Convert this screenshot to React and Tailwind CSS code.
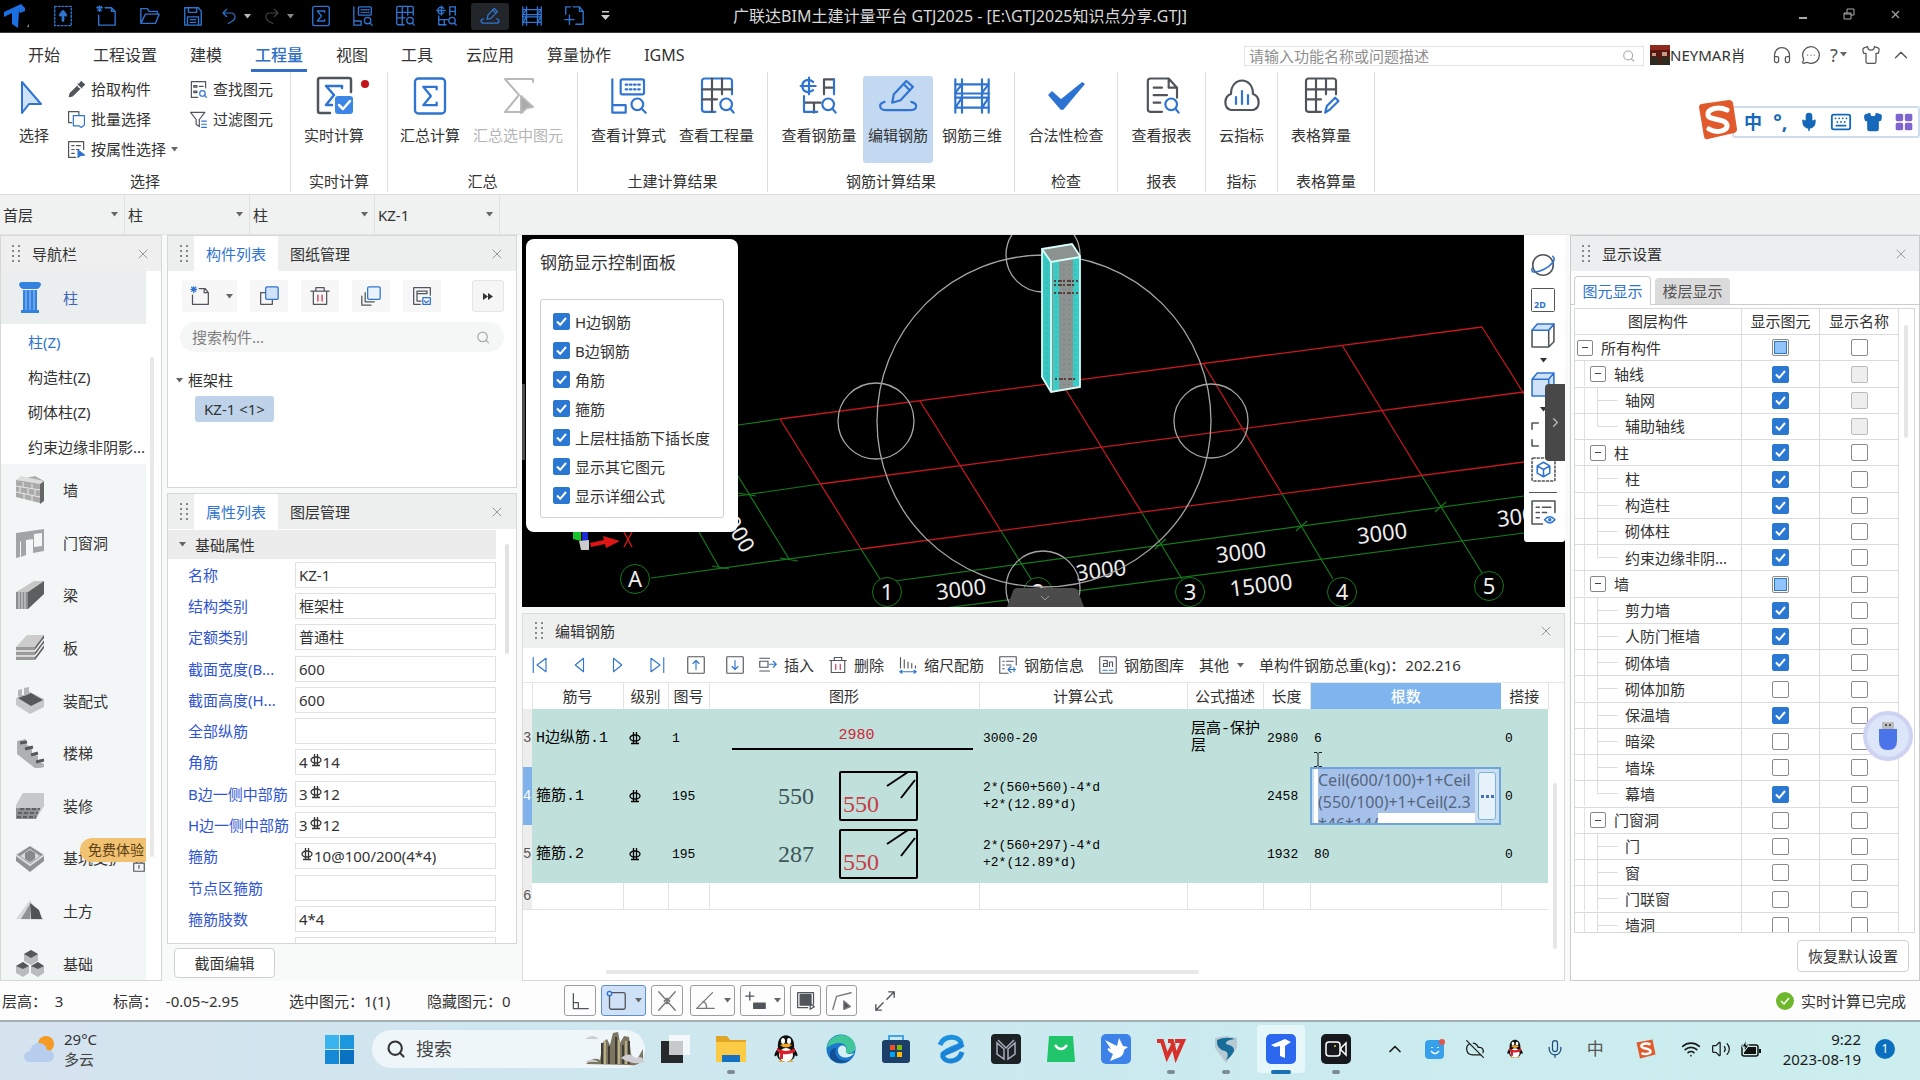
import { useEffect, useRef } from "react";
import {
  ChevronRight,
  ChevronUp,
  CloudOff,
  Headphones,
  Keyboard,
  LayoutGrid,
  MessageCircleMore,
  Mic,
  Search,
  Shirt,
  Volume2,
  Wifi,
  X
} from "lucide-react";

const BLUE = "#2f74d0";
const DARK = "#50555b";

/* ---------- small shared pieces ---------- */

function Icon({ size = 24, box = 24, sw = 1.5, color = BLUE, className = "", children }) {
  return (
    <svg
      width={size}
      height={size}
      viewBox={`0 0 ${box} ${box}`}
      fill="none"
      stroke={color}
      strokeWidth={sw}
      strokeLinejoin="round"
      strokeLinecap="round"
      className={`shrink-0 ${className}`}
      aria-hidden="true"
    >
      {children}
    </svg>
  );
}

function Caret({ className = "text-[#666]" }) {
  return (
    <svg width="7" height="5" viewBox="0 0 7 5" className={`shrink-0 ${className}`} aria-hidden="true">
      <path d="M0 0h7L3.500 4.500z" fill="currentColor" />
    </svg>
  );
}

function Grip() {
  return (
    <svg width="8" height="18" viewBox="0 0 8 18" fill="#888" className="shrink-0" aria-hidden="true">
      {[0, 5, 10, 15].map((y) => (
        <g key={y}>
          <rect x="0" y={y} width="2" height="2" />
          <rect x="6" y={y} width="2" height="2" />
        </g>
      ))}
    </svg>
  );
}

function CloseButton() {
  return (
    <button aria-label="关闭" className="ml-auto text-[#9a9a9a]">
      <X size={16} strokeWidth={1.5} />
    </button>
  );
}

function Check({ label, checked, partial, disabled }) {
  return (
    <span className="inline-grid h-[17px] w-[17px] place-items-center align-middle">
      <input
        type="checkbox"
        aria-label={label}
        defaultChecked={checked}
        disabled={disabled}
        className="col-start-1 row-start-1 h-[17px] w-[17px] appearance-none rounded-[2px] border border-[#8a8a8a] bg-white checked:border-[#2b78d2] checked:bg-[#2b78d2] disabled:border-[#bbb] disabled:bg-[#eee]"
      />
      {checked && (
        <svg viewBox="0 0 17 17" className="pointer-events-none col-start-1 row-start-1 h-[17px] w-[17px]" fill="none" stroke="#fff" strokeWidth="2">
          <path d="M4 8.500l3.200 3.300L13 5" />
        </svg>
      )}
      {partial && <span className="pointer-events-none col-start-1 row-start-1 h-[13px] w-[13px] border border-[#2b78d2] bg-[#90c4fb]" />}
    </span>
  );
}

/* ---------- drawings used in more than one place ---------- */

const art = {
  sum: (
    <>
      <rect x="3" y="1.500" width="18" height="21" rx="2" />
      <path d="M16 8V6.500H8L12.500 12 8 17.500h8V16" />
    </>
  ),
  formula: (
    <>
      <path d="M2 2v20h8v-4.500H2" />
      <rect x="7" y="2" width="14" height="9" rx="1" />
      <path d="M10 5.200h8.500M10 8h8.500" strokeDasharray="1 1.500" />
      <circle cx="17" cy="17" r="3.500" />
      <path d="M19.500 19.500L22 22" />
    </>
  ),
  quantity: (c) => (
    <>
      <path d="M21 11V3a1.500 1.500 0 0 0-1.500-1.500h-15A1.500 1.500 0 0 0 3 3v17a1.500 1.500 0 0 0 1.500 1.500H11" />
      <path d="M3 8h18M3 14h9M9 1.500v20M15 1.500V11" stroke={c || DARK} />
      <circle cx="17.500" cy="17" r="3.500" />
      <path d="M20 19.500l2 2.500" />
    </>
  ),
  rebar: (c) => (
    <>
      <path d="M8.500 3.500C5 1 2 3 2 6s3 5 6.500 2.500M1 6h9M6 1v10" />
      <path d="M15 11V2h6M15 7h6M3 16h10M9 16v6" stroke={c || DARK} />
      <path d="M3 12v9.500h8M21 11V2" />
      <circle cx="17.500" cy="17" r="3.500" />
      <path d="M20 19.500l2 2.500" />
    </>
  ),
  pen: (
    <>
      <path d="M8.500 16l1-5 7.500-8 4 3.500-7.500 8z" />
      <path d="M15.500 5l3.500 3.500M4 15.500c-4 1-3.500 5 1 5h14c5 0 5-4 1-5" />
    </>
  ),
  rebar3d: (
    <>
      <path d="M2 2v20M22 2v20M6 2v20M18 2v20" />
      <path d="M2 5h20M2 10.500h20M2 13h20M2 19h20M2 10l4-5M18 10l4-5M2 19l4-6M18 19l4-6" />
    </>
  )
};

/* ---------- title bar ---------- */

function TitleBar() {
  return (
    <header className="grid h-[33px] shrink-0 grid-cols-[minmax(0,1fr)_auto_minmax(0,1fr)] items-center border-b border-[#3a3a3a] bg-black">
      <div className="flex items-center">
        <svg width="26" height="28" viewBox="0 0 26 28" className="ml-1 shrink-0" aria-label="GTJ">
          <path d="M0 10L17 2l4 4v3l-5 2-1-2-1 17-6-4V11l-8 4z" fill="#1c6fe0" />
          <path d="M23 25l2-3v3z" fill="#999" />
        </svg>
        <div className="ml-[22px] flex w-[152px] items-center justify-between">
          <Icon size={22}><path d="M3 1.500h18v21H3z" strokeDasharray="2 2" /><path d="M12 17V8m-3 3l3-4 3 4" strokeWidth="3" /></Icon>
          <Icon size={22}><path d="M11 3h7l4 4v15H4V11M18 3v4h4M2 3h6M5 1v6M3 2l4 4M7 2L3 6" /></Icon>
          <Icon size={22}><path d="M2 20V4h7l2 3h9v3M2 20h16l4-10H7z" /></Icon>
          <Icon size={22}><path d="M3 3h15l3 4v15H3zM7 3v5h9V3M6 13h12v9H6zM9 16h6M9 19h6" /></Icon>
        </div>
        <div className="ml-4 flex items-center gap-1.5">
          <Icon size={18}><path d="M4 8h11c6 0 7 8 1 11l-5 3M9 3L4 8l5 5" /></Icon>
          <Caret className="text-[#bbb]" />
        </div>
        <div className="ml-3 flex items-center gap-1.5">
          <Icon size={18} color="#444"><path d="M20 8H9C3 8 2 16 8 19l5 3M15 3l5 5-5 5" /></Icon>
          <Caret className="text-[#888]" />
        </div>
        <div className="ml-4 flex items-center gap-[20px]">
          <Icon size={22}>{art.sum}</Icon>
          <Icon size={22}>{art.formula}</Icon>
          <Icon size={22}>{art.quantity(BLUE)}</Icon>
          <Icon size={22}>{art.rebar(BLUE)}</Icon>
        </div>
        <span className="ml-[13px] grid h-[27px] w-[38px] place-items-center rounded-[3px] bg-[#22252a]">
          <Icon size={20}>{art.pen}</Icon>
        </span>
        <Icon size={22} className="ml-3">{art.rebar3d}</Icon>
        <Icon size={22} className="ml-[20px]"><path d="M3 10V2h5M11 2h7l4 5v14h-8M18 2v5h4M7 11v10M2 16h10" /></Icon>
        <svg width="9" height="10" viewBox="0 0 9 10" className="ml-4" fill="#ccc"><path d="M1 0h7v1.500H1zM0 4h9L4.500 9z" /></svg>
      </div>
      <h1 className="text-base leading-[30px] whitespace-nowrap text-[#d9d9d9]">广联达BIM土建计量平台 GTJ2025 - [E:\GTJ2025知识点分享.GTJ]</h1>
      <div className="flex justify-end gap-[34px] pr-[18px] pb-1 text-[#aaa]">
        <button aria-label="最小化"><svg width="12" height="12"><path d="M2 9h8v2H2z" fill="#aaa" /></svg></button>
        <button aria-label="还原"><svg width="12" height="12" fill="none" stroke="#aaa"><path d="M1 5h7v6H1zM4 5V1h7v6H8M1 6h7" /></svg></button>
        <button aria-label="关闭窗口"><X size={13} strokeWidth={2} /></button>
      </div>
    </header>
  );
}

/* ---------- menu + ribbon ---------- */

const menus = ["开始", "工程设置", "建模", "工程量", "视图", "工具", "云应用", "算量协作", "IGMS"];

function MenuRow() {
  return (
    <div className="flex h-[39px] shrink-0 items-center bg-white">
      <nav className="flex gap-[33px] pl-7 text-base">
        {menus.map((m) => (
          <button
            key={m}
            className={
              m === "工程量"
                ? "relative h-[39px] pt-1 font-medium text-[#2f6fc4] after:absolute after:inset-x-[-4px] after:bottom-0 after:h-[3px] after:bg-[#2f6fc4]"
                : "h-[39px] pt-1"
            }
          >
            {m}
          </button>
        ))}
      </nav>
      <div className="mt-1.5 ml-auto flex h-5 w-[400px] items-center border border-[#e3e3e3] px-1">
        <input aria-label="搜索功能" placeholder="请输入功能名称或问题描述" className="w-full text-[15px] outline-none placeholder:text-[#8e8e8e]" />
        <Search size={14} className="mr-1 text-[#aaa]" />
      </div>
      <div className="mt-1 ml-1.5 flex items-center">
        <svg width="20" height="20" viewBox="0 0 20 20" aria-label="头像">
          <path d="M0 0h20v20H0z" fill="#5a1712" />
          <path d="M0 0h20v5H0z" fill="#8e2a1e" />
          <path d="M2 8h4v3H2zM12 7h5v4h-5z" fill="#c59a86" />
          <path d="M0 12h9v8H0zM11 12h9v8h-9z" fill="#2e2b20" />
        </svg>
        <span className="w-[102px] text-[15px]">NEYMAR肖</span>
        <div className="flex items-center gap-[9px] pr-2 text-[#555]">
          <Headphones size={20} strokeWidth={1.5} />
          <MessageCircleMore size={20} strokeWidth={1.5} />
          <button className="flex w-[22px] items-center gap-0.5 text-lg leading-5">?<Caret /></button>
          <Shirt size={20} strokeWidth={1.5} />
          <ChevronUp size={22} strokeWidth={1.5} />
        </div>
      </div>
    </div>
  );
}

function RibbonGroup({ title, className = "", bodyClass = "justify-center", children }) {
  return (
    <section className={`flex shrink-0 flex-col border-r border-[#dedede] ${className}`}>
      <div className={`flex flex-1 ${bodyClass}`}>{children}</div>
      <div className="text-center">{title}</div>
    </section>
  );
}

function BigButton({ label, active, muted, icon, className = "" }) {
  return (
    <button
      className={`mt-1 flex h-[87px] flex-col items-center gap-2 rounded-[3px] whitespace-nowrap ${active ? "bg-[#c3d9f2]" : ""} ${muted ? "text-[#b5b5b5]" : ""} ${className}`}
    >
      {icon}
      <span className="leading-[22px]">{label}</span>
    </button>
  );
}

function SmallButton({ label, icon, caret }) {
  return (
    <button className="flex h-[30px] items-center gap-[5px] whitespace-nowrap">
      {icon}
      {label}
      {caret && <Caret />}
    </button>
  );
}

function Ribbon() {
  return (
    <div className="flex h-[123px] shrink-0 border-b border-[#dcdcdc] bg-white text-[15px]">
      <div className="flex pb-0.5">
        <RibbonGroup title="选择" className="w-[291px]">
          <BigButton
            label="选择"
            className="mr-[16px] w-[34px]"
            icon={<Icon size={40} box={40} sw={2}><path d="M8 6v31l7-9h12z" fill="#cfe2f8" /></Icon>}
          />
          <div className="mt-0.5 mr-[10px] w-[112px]">
            <SmallButton label="拾取构件" icon={<Icon size={19} color={DARK}><path d="M14 5l5 5M13 8L4 17l-1 4 4-1 9-9M15 6l3-4 4 4-4 3z" fill="#50555b" /></Icon>} />
            <SmallButton label="批量选择" icon={<Icon size={19} color={DARK}><path d="M6 16H2V2h13v4" /><path d="M8 7h14v12l-4 3-3-2H8z" stroke={BLUE} /></Icon>} />
            <SmallButton label="按属性选择" caret icon={<Icon size={19} color={DARK}><path d="M11 22H2V2h19v10M6 7h3M12 7h5M6 12h3M12 12h3M6 17h3" /><path d="M14 13l8 6-5 .5L14 22z" fill={BLUE} stroke={BLUE} /></Icon>} />
          </div>
          <div className="mt-0.5">
            <SmallButton label="查找图元" icon={<Icon size={19} color={DARK}><path d="M21 10V2H3v20h8M6 7h4v2H6zM6 14h4v2H6zM13 8h5" /><circle cx="17" cy="17" r="3.500" stroke={BLUE} /><path d="M19 19l3 3" stroke={BLUE} /></Icon>} />
            <SmallButton label="过滤图元" icon={<Icon size={19} color={DARK}><path d="M2 3h18l-7 9v9l-4-3v-6z" /><path d="M16 14h6M16 18h6M16 22h6" stroke={BLUE} /></Icon>} />
          </div>
        </RibbonGroup>
        <RibbonGroup title="实时计算" className="w-[97px]" bodyClass="pl-2">
          <BigButton
            label="实时计算"
            className="relative w-[70px]"
            icon={
              <>
                <Icon size={40} box={40} sw={2.5} color={DARK}>
                  <path d="M37 16V4a2 2 0 0 0-2-2H6a2 2 0 0 0-2 2v31a2 2 0 0 0 2 2h10" />
                  <path d="M28 12v-2H12l8 9-8 10h6" stroke={BLUE} />
                  <rect x="21" y="20" width="18" height="18" rx="3" fill="#3b86e6" stroke="none" />
                  <path d="M25 29l4 4 7-8" stroke="#fff" />
                </Icon>
                <span className="absolute top-1 right-0 h-2 w-2 rounded-full bg-[#c4141c]" />
              </>
            }
          />
        </RibbonGroup>
        <RibbonGroup title="汇总" className="w-[190px]" bodyClass="pl-1">
          <BigButton label="汇总计算" className="w-[76px]" icon={<Icon size={40} sw={1.4}>{art.sum}</Icon>} />
          <BigButton label="汇总选中图元" muted className="w-[100px]" icon={<Icon size={40} box={40} sw={2} color="#b9b9b9"><path d="M35 6V3H7l14 16L7 36h18" /><path d="M23 20l12 11-6 1-6 5z" fill="#aaa" /></Icon>} />
        </RibbonGroup>
        <RibbonGroup title="土建计算结果" className="w-[190px]">
          <BigButton label="查看计算式" className="w-[88px]" icon={<Icon size={40} sw={1.3}>{art.formula}</Icon>} />
          <BigButton label="查看工程量" className="w-[88px]" icon={<Icon size={40} sw={1.3}>{art.quantity()}</Icon>} />
        </RibbonGroup>
        <RibbonGroup title="钢筋计算结果" className="w-[247px]">
          <BigButton label="查看钢筋量" className="w-[88px]" icon={<Icon size={40} sw={1.3}>{art.rebar()}</Icon>} />
          <BigButton label="编辑钢筋" active className="mr-1 w-[70px]" icon={<Icon size={40} sw={1.3}>{art.pen}</Icon>} />
          <BigButton label="钢筋三维" className="w-[70px]" icon={<Icon size={40} sw={1.3}>{art.rebar3d}</Icon>} />
        </RibbonGroup>
        <RibbonGroup title="检查" className="w-[103px]">
          <BigButton label="合法性检查" className="w-[80px]" icon={<Icon size={40} box={40}><path d="M3 19l3-3 9 8L36 7l2 1-21 25h-2z" fill="#2a72d4" /></Icon>} />
        </RibbonGroup>
        <RibbonGroup title="报表" className="w-[88px]">
          <BigButton label="查看报表" className="w-[70px]" icon={<Icon size={40} sw={1.3} color={DARK}><path d="M21 13V7l-5-5.500H5A1.500 1.500 0 0 0 3.500 3v17A1.500 1.500 0 0 0 5 21.500h7M16 2v5h5M7 7h5M7 11.500h8M7 16h4" /><circle cx="17.500" cy="17" r="3.500" stroke={BLUE} /><path d="M20 19.500l2 2.500" stroke={BLUE} /></Icon>} />
        </RibbonGroup>
        <RibbonGroup title="指标" className="w-[72px]">
          <BigButton label="云指标" className="w-[60px]" icon={<Icon size={40} box={40} sw={2.2} color={DARK}><path d="M9 34c-8-2-7-14 0-16C9 0 31 0 31 18c7 2 8 14 0 16z" /><path d="M14 28v-7M20 28V15M26 28v-9" stroke={BLUE} /></Icon>} />
        </RibbonGroup>
        <RibbonGroup title="表格算量" className="w-[97px]" bodyClass="pl-2">
          <BigButton label="表格算量" className="w-[70px]" icon={<Icon size={40} sw={1.3} color={DARK}><path d="M21 11V3a1.500 1.500 0 0 0-1.500-1.500h-15A1.500 1.500 0 0 0 3 3v17a1.500 1.500 0 0 0 1.500 1.500H12M3 8h18M3 14h9M9 1.500v20M15 1.500V11" /><path d="M14.500 22l1-4 5-5 2 2-5 5z" stroke={BLUE} /></Icon>} />
        </RibbonGroup>
      </div>
      <div className="mt-[29px] ml-auto flex h-[38px] items-center">
        <svg width="40" height="40" viewBox="0 0 40 40" className="z-10 shrink-0" aria-label="搜狗输入法">
          <path d="M1 7Q1 5 3 4L31 0q3 0 4 3l4 26q0 3-3 4L10 39q-3 1-4-2z" fill="#e05a2c" />
          <path d="M29 10C20 6 9 9 10 15s18 3 19 10-12 8-18 4" fill="none" stroke="#fff" strokeWidth="5" strokeLinecap="round" />
        </svg>
        <div className="mt-1 -ml-1.5 flex h-8 w-[188px] items-center justify-between rounded-[3px] border-2 border-[#cfdcec] bg-white pr-1 pl-2.5 text-[#1668b8]">
          <span className="text-lg leading-none font-bold">中</span>
          <span className="text-xl leading-none font-bold">°,</span>
          <Mic size={20} fill="#1668b8" />
          <Keyboard size={22} />
          <Shirt size={20} fill="#1668b8" />
          <LayoutGrid size={20} className="text-[#8065d0]" fill="#8065d0" />
        </div>
      </div>
    </div>
  );
}

function FloorSelectors() {
  return (
    <div className="flex h-10 shrink-0 border-b border-[#e2e4e4] bg-[#f0f2f1] text-[15px]">
      {[["楼层", "首层"], ["构件大类", "柱"], ["构件类型", "柱"], ["构件", "KZ-1"]].map(([name, value]) => (
        <label key={name} className="flex w-[125px] items-center border-r border-[#e0e2e2] pr-1.5 pl-[3px]">
          <select aria-label={name} className="w-full appearance-none bg-transparent outline-none">
            <option>{value}</option>
          </select>
          <Caret />
        </label>
      ))}
    </div>
  );
}

/* ---------- left navigation ---------- */

const navItems = [
  ["墙", <g key="a"><path d="M1 5l19-4 9 5-4 22L1 22z" fill="#aaa" /><path d="M25 9l4-3v20l-4 3z" fill="#666" /><path d="M1 5l5-4 23 5-4 3z" fill="#ddd" /><path d="M1 11l24 4M1 17l24 5M8 7v5M17 9v5M5 12v5M13 14v5M20 15v5M9 18v6M17 20v6" stroke="#e9e9e9" /></g>],
  ["门窗洞", <g key="b"><path d="M1 5l28-4v22l-11 2V11l-7 1v15l-5 2V13l-1 1v15l-4 1z" fill="#a2a5a7" /><path d="M19 6l8-1v13l-8 1z" fill="#f4f6f6" /></g>],
  ["梁", <g key="c"><path d="M1 12L19 1h10L13 12z" fill="#c7c7c7" /><path d="M1 12h12v17H1z" fill="#8b8e90" /><path d="M13 12L29 1v13L13 29z" fill="#5c5f60" /><path d="M4 12v17M7 12v17M10 12v17" stroke="#ddd" /></g>],
  ["板", <g key="d"><path d="M1 14L12 2h17L20 14z" fill="#ccc" /><path d="M1 14h19v13H1z" fill="#999" /><path d="M20 14l9-12v13L20 27z" fill="#5f6263" /><path d="M1 18h19l9-12M1 23h19l9-12" stroke="#eee" fill="none" strokeWidth="1.500" /></g>],
  ["装配式", <g key="e"><path d="M1 12l14-6 14 7v8l-14 7-14-9z" fill="#c5c7c8" /><path d="M3 12l13-5 12 7-12 6z" fill="#55595a" /><path d="M3 4l4-1v7l-4 1zM9 2l5-1v7l-5 2z" fill="#b5b8b9" /></g>],
  ["楼梯", <g key="f"><path d="M2 3l9-2v5l6 4v5l6 3v5l6 3v3l-8 2L2 16z" fill="#aeb1b2" /><path d="M5 5l7-1M10 11l8-2M16 17l7-2M21 24l8-2" stroke="#55595a" strokeWidth="3" /></g>],
  ["装修", <g key="g"><path d="M1 14L8 2h21v13l-8 13H1z" fill="#c6c9ca" /><path d="M1 17h24l-4 11H1z" fill="#8c9091" /><path d="M5 18h20M3 22h20M2 26h19" stroke="#4d5152" strokeWidth="1.500" strokeDasharray="4 2" /></g>],
  ["基坑支护", <g key="h"><path d="M1 12L15 3l14 9v6l-14 11L1 18z" fill="#8f9293" /><path d="M5 13l10-7 10 7-10 7z" fill="#d5d7d8" /><path d="M10 16v-6l5-3 5 3v6l-5 3z" fill="#85898a" /><path d="M1 12l14 10 14-10" stroke="#ddd" fill="none" strokeWidth="2" /></g>],
  ["土方", <g key="i"><path d="M1 23L15 4l14 20z" fill="#d5d9da" /><path d="M6 23l9-15v15z" fill="#8e9293" /><path d="M15 7l9 7 3 9H16z" fill="#505455" /></g>],
  ["基础", <g key="j"><path d="M9 5l7-4 7 4v7l-7 4-7-4zM1 17l7-4 6 4v7l-6 4-7-4zM16 17l7-4 6 4v7l-6 4-7-4z" fill="#b9bcbd" /><path d="M9 5l7-4 7 4-7 4zM1 17l7-4 6 4-6 3zM16 17l7-4 6 4-6 3z" fill="#54585a" /></g>]
];

function NavPanel() {
  return (
    <aside className="flex w-[162px] shrink-0 flex-col overflow-hidden border border-[#d6d8d8] bg-white">
      <div className="flex h-[35px] shrink-0 items-center bg-[#efefef] pr-2.5 pl-[11px]">
        <Grip />
        <span className="ml-3">导航栏</span>
        <CloseButton />
      </div>
      <div className="flex min-h-0 flex-1">
        <div className="w-[145px] overflow-hidden">
          <button className="flex h-[53px] w-full items-center bg-[#ebeeef] pl-[18px] text-[#3f68b8]">
            <svg width="22" height="32" viewBox="0 0 22 32" className="mr-[22px]">
              <path d="M0 3q0-3 3-3h16q3 0 3 3-1 3-4 4H4Q1 6 0 3z" fill="#3382df" />
              <path d="M4 8h14v20H4zM2 28h18v3H2z" fill="#3382df" />
              <path d="M7 8v20M11 8v20M15 8v20" stroke="#9fc8f6" />
            </svg>
            柱
          </button>
          {["柱(Z)", "构造柱(Z)", "砌体柱(Z)", "约束边缘非阴影..."].map((t, i) => (
            <button key={t} className={`block h-[35px] w-full pl-[27px] text-left whitespace-nowrap ${i === 0 ? "text-[#2f74d0]" : ""}`}>
              {t}
            </button>
          ))}
          <div className="grid h-[526px] auto-rows-fr bg-[#f3f6f6]">
            {navItems.map(([name, drawing]) => (
              <button key={name} className="relative flex items-center pl-3.5">
                <svg width="30" height="30" viewBox="0 0 30 30" className="mr-[18px] shrink-0">{drawing}</svg>
                {name}
                {name === "基坑支护" && (
                  <>
                    <Icon size={14} color="#555" className="absolute right-0 bottom-3" sw={2}><path d="M3 7h18v14H3zM12 11v5M8 7V3h8v4" /></Icon>
                    <span className="absolute top-1.5 right-0 h-6 rounded-l-full bg-[#f0c272] pr-0.5 pl-2 text-sm leading-6 text-[#5b3d12]">免费体验</span>
                  </>
                )}
              </button>
            ))}
          </div>
        </div>
        <div className="mt-[86px] ml-1 h-[500px] w-1 rounded-full bg-[#e8e8e8]" />
      </div>
    </aside>
  );
}

/* ---------- component list + properties ---------- */

function TabHeader({ tabs }) {
  return (
    <div className="flex h-[35px] shrink-0 items-center bg-[#edeeee] pr-[11px] pl-3">
      <Grip />
      <div className="ml-1.5 flex h-full">
        <button className="bg-white px-3 text-[#2f74d0]">{tabs[0]}</button>
        <button className="px-3">{tabs[1]}</button>
      </div>
      <CloseButton />
    </div>
  );
}

function ComponentPanel() {
  return (
    <section className="flex h-[253px] shrink-0 flex-col border border-[#d6d8d8] bg-white">
      <TabHeader tabs={["构件列表", "图纸管理"]} />
      <div className="mt-[9px] flex h-8 gap-[13px] pr-3 pl-3.5">
        <button aria-label="新建" className="flex w-[55px] items-center gap-4 bg-[#f7f7f7] pl-2">
          <Icon size={20} color={DARK}><path d="M11 3h7l4 5v14H3V11M17 3v5h5" /><path d="M1 4h7M4.500 1v7M2 1.500l5 5M7 1.500l-5 5" stroke={BLUE} /></Icon>
          <Caret />
        </button>
        <button aria-label="复制" className="grid w-[38px] place-items-center bg-[#f7f7f7]">
          <Icon size={20} color={DARK}><path d="M8 8H2v14h14v-5" /><rect x="8" y="1" width="15" height="15" rx="1.500" fill="#cfe2f8" stroke={BLUE} /></Icon>
        </button>
        <button aria-label="删除构件" className="grid w-[38px] place-items-center bg-[#f7f7f7]">
          <Icon size={20} color={DARK}><path d="M1 6h22M4 6v16h16V6M7 6V2h10v4" /><path d="M9.500 11v7M14.500 11v7" stroke="#c43150" /></Icon>
        </button>
        <button aria-label="层间复制" className="grid w-[38px] place-items-center bg-[#f7f7f7]">
          <Icon size={20} color={DARK}><path d="M5 8v11h11M1 12v11h11" /><rect x="8" y="1" width="15" height="15" rx="1.500" fill="#eaf3fd" stroke={BLUE} /></Icon>
        </button>
        <button aria-label="存档" className="grid w-[38px] place-items-center bg-[#f7f7f7]">
          <Icon size={20} color={DARK}><path d="M10 22H2V2h20v9M6 6h12v3H6zM6 9v9h5" /><path d="M13 14h9v8h-9zM15 18l2 2 3-2" stroke={BLUE} /></Icon>
        </button>
        <button aria-label="更多" className="ml-auto grid w-8 place-items-center rounded-[3px] border border-[#e6e6e6] bg-[#f6f6f6]">
          <svg width="10" height="7" fill="#333"><path d="M0 0l5 3.500L0 7zM5 0l5 3.500L5 7z" /></svg>
        </button>
      </div>
      <div className="mx-3 mt-2.5 flex h-[30px] items-center rounded-full bg-[#f5f6f6] pr-3.5 pl-3">
        <input aria-label="搜索构件" placeholder="搜索构件..." className="w-full bg-transparent outline-none placeholder:text-[#808080]" />
        <Search size={15} className="text-[#aaa]" />
      </div>
      <div className="mt-4 flex h-6 items-center gap-[5px] pl-2">
        <Caret />
        框架柱
      </div>
      <button className="mt-1 ml-[27px] h-[26px] w-[79px] rounded-[3px] bg-[#bed3ea] whitespace-pre">KZ-1 &lt;1&gt;</button>
    </section>
  );
}

function RebarMark({ className = "" }) {
  return (
    <svg width="12" height="13" viewBox="0 0 12 13" fill="none" stroke="currentColor" strokeWidth="1.300" className={className} aria-hidden="true">
      <ellipse cx="6" cy="6" rx="5" ry="3" />
      <path d="M4.500 0v11M7.500 0v11M2 11.500h8" />
    </svg>
  );
}

const properties = [
  ["名称", "KZ-1"],
  ["结构类别", "框架柱"],
  ["定额类别", "普通柱"],
  ["截面宽度(B...", "600"],
  ["截面高度(H...", "600"],
  ["全部纵筋", ""],
  ["角筋", "4\u200314", 1],
  ["B边一侧中部筋", "3\u200312", 1],
  ["H边一侧中部筋", "3\u200312", 1],
  ["箍筋", "\u200310@100/200(4*4)", 2],
  ["节点区箍筋", ""],
  ["箍筋肢数", "4*4"],
  ["", ""]
];

function PropertyPanel() {
  return (
    <section className="flex min-h-0 flex-1 flex-col border border-[#d6d8d8] bg-white">
      <TabHeader tabs={["属性列表", "图层管理"]} />
      <div className="flex min-h-0 flex-1">
        <div className="min-w-0 flex-1 overflow-hidden">
          <div className="mt-px flex h-[29px] items-center gap-[9px] bg-[#ececec] pl-[11px]">
            <Caret />
            基础属性
          </div>
          <div className="grid h-[407px] auto-rows-fr">
            {properties.map(([name, value, mark]) => (
              <label key={name} className="flex items-center whitespace-nowrap">
                <span className="w-[127px] shrink-0 pl-5 text-[#2f55d4]">{name}</span>
                <span className="relative flex h-[26px] flex-1 items-center border border-[#e1e1e1]">
                  <input defaultValue={value} className="w-full min-w-0 px-[3px] outline-none" />
                  {mark === 1 && <RebarMark className="absolute top-1 left-[14px]" />}
                  {mark === 2 && <RebarMark className="absolute top-1 left-[5px]" />}
                </span>
              </label>
            ))}
          </div>
        </div>
        <div className="w-5 pt-[15px] pl-[9px]">
          <div className="h-[110px] w-1 rounded-full bg-[#e2e2e2]" />
        </div>
      </div>
    </section>
  );
}

/* ---------- 3D view ---------- */

const redLines = [
  [780, 419, 1482, 327], [820, 484, 1524, 392], [861, 549, 1524, 462],
  [780, 419, 861, 549], [920, 401, 1001, 531], [1063, 385, 1142, 513],
  [1203, 363, 1282, 494], [1342, 345, 1422, 476], [1482, 327, 1524, 394]
];
const greenLines = [
  [738, 425, 780, 419], [738, 496, 820, 484], [651, 578, 861, 549],
  [699, 532, 720, 569], [738, 476, 789, 559],
  [880, 583, 1524, 496], [945, 608, 1524, 533],
  [861, 549, 880, 579], [1001, 531, 1031, 579], [1142, 513, 1182, 579],
  [1282, 494, 1333, 579], [1422, 476, 1482, 573],
  [712, 566, 729, 569], [780, 558, 798, 561], [738, 493, 756, 496],
  [1155, 549, 1166, 539], [1296, 531, 1307, 521], [1435, 512, 1446, 502]
];
const axes = [[635, 579, "A"], [887, 592, "1"], [1038, 592, "2"], [1190, 592, "3"], [1342, 592, "4"], [1489, 586, "5"]];
const dims = [[961, 589, "3000"], [1101, 570, "3000"], [1241, 552, "3000"], [1382, 533, "3000"], [1522, 516, "3000"], [1261, 585, "15000"]];

function Scene() {
  return (
    <svg viewBox="522 235 1043 372" preserveAspectRatio="xMidYMid slice" className="absolute inset-0 h-full w-full" fontFamily="'Noto Sans', sans-serif" fontSize="22" textAnchor="middle" aria-label="三维视图">
      <g stroke="#c31820" strokeWidth="1.300">{redLines.map(([a, b, c, d], i) => <line key={i} x1={a} y1={b} x2={c} y2={d} />)}</g>
      <g stroke="#157a1c" strokeWidth="1.200">{greenLines.map(([a, b, c, d], i) => <line key={i} x1={a} y1={b} x2={c} y2={d} />)}</g>
      {axes.map(([x, y, t]) => (
        <g key={t}>
          <circle cx={x} cy={y} r="14.500" fill="#000" stroke="#157a1c" />
          <text x={x} y={y + 8} fill="#eee">{t}</text>
        </g>
      ))}
      {dims.map(([x, y, t]) => (
        <text key={x} x={x} y={y + 8} fill="#eee" transform={`rotate(-7 ${x} ${y})`}>{t}</text>
      ))}
      <text x="738" y="541" fill="#eee" transform="rotate(60 738 535)">000</text>
      <g fill="none" stroke="#a5a5a5" strokeWidth="1.300">
        <ellipse cx="1044" cy="421" rx="167" ry="166" />
        <circle cx="876" cy="421" r="38" />
        <circle cx="1211" cy="421" r="37" />
        <circle cx="1043" cy="255" r="37" />
        <circle cx="1043" cy="588" r="37" />
      </g>
      <path d="M1042 249l30-5 8 12v131l-29 5-9-15z" fill="#8c9290" />
      <path d="M1043 251l8 10v129l-8-13z" fill="#33c9c2" />
      <path d="M1053 262h6v128h-6zM1073 258h6v128h-6z" fill="#35cfc8" />
      <path d="M1056 266v120M1075 264v120M1047 262v120" stroke="#57a5a1" strokeWidth="1" strokeDasharray="2 3" />
      <path d="M1064 264v124M1069 264v124" stroke="#6d7372" strokeDasharray="1 4" />
      <path d="M1054 281h24M1054 285h22M1054 293h24M1055 379h22" stroke="#55403c" strokeWidth="2" strokeDasharray="2 2 4 1" />
      <path d="M1042 249l30-5 8 12v131l-29 5-9-15zM1042 249l9 13 29-5M1051 262v130" fill="none" stroke="#d6fffb" strokeWidth="1.800" />
      <path d="M573 532h8v9l-8-2z" fill="#18c62c" />
      <path d="M582 532h6v12h-6z" fill="#1c2cd0" />
      <path d="M579 541l10-1v10h-8z" fill="#ccc" />
      <path d="M590 543l14-3-1-4 17 5-14 7-1-4-14 3z" fill="#e01616" />
      <path d="M624 532l8 15M632 532l-8 15" stroke="#d01616" strokeWidth="1.500" />
      <path d="M1007 607l6-16q1-3 4-3h56q4 0 5 3l6 16z" fill="#4b4b4b" />
      <path d="M1041 596l4 4 4-4" fill="none" stroke="#999" />
      <path d="M522 384h3v76h-3z" fill="#4b4b4b" />
    </svg>
  );
}

const shown = ["H边钢筋", "B边钢筋", "角筋", "箍筋", "上层柱插筋下插长度", "显示其它图元", "显示详细公式"];

function View3D() {
  return (
    <section className="relative h-[372px] shrink-0 overflow-hidden bg-black">
      <Scene />
      <div className="absolute top-1 left-1 w-[212px] rounded-lg bg-white p-3.5 pt-2.5">
        <h2 className="text-[17px] leading-7">钢筋显示控制面板</h2>
        <fieldset className="mt-[22px] rounded-[3px] border border-[#cfd2d2] px-3 py-[7px]">
          {shown.map((t) => (
            <label key={t} className="flex h-[29px] items-center gap-[5px] whitespace-nowrap">
              <Check checked label={t} />
              {t}
            </label>
          ))}
        </fieldset>
      </div>
      <div className="absolute top-0 right-0 flex h-[307px] w-[41px] flex-col items-center rounded-b-[3px] bg-white pt-[17px] pr-[3px]">
        <Icon size={26} color={DARK}><circle cx="12" cy="12" r="9.500" /><path d="M21 4c4 3-2 9-8 12S0 20 2 15" stroke={BLUE} /></Icon>
        <svg width="24" height="24" viewBox="0 0 24 24" className="mt-[10px] shrink-0" fill="none" stroke={DARK}><rect x=".5" y=".5" width="23" height="23" rx="1" /><text x="3" y="20" fontSize="9" fontWeight="700" fontFamily="'Noto Sans'" stroke="none" fill={BLUE}>2D</text></svg>
        <Icon size={25} color={DARK} className="mt-[11px]"><path d="M1 7h16v16H1zM17 7l5-6v17l-5 5" /><path d="M1 7l5-6h16l-5 6z" fill="#cfe2f8" stroke={BLUE} /></Icon>
        <Caret className="mt-2.5 text-[#333]" />
        <Icon size={25} color={BLUE} className="mt-[9px]"><path d="M1 7h16v16H1zM17 7l5-6v17l-5 5M1 7l5-6h16l-5 6z" fill="#cfe2f8" /></Icon>
        <Caret className="mt-2.5 text-[#333]" />
        <Icon size={25} color={DARK} className="mt-2.5"><path d="M7 1H1v6M17 1h6v6M1 17v6h6M23 17v6h-6" /></Icon>
        <Icon size={25} color={DARK} className="mt-2.5"><rect x="1" y="1" width="22" height="22" rx="1" strokeDasharray="2 2" /><path d="M12 5l6 3.500v7L12 19l-6-3.500v-7zM6 8.500l6 3.500 6-3.500M12 12v7" stroke={BLUE} /></Icon>
        <span className="mt-2.5 h-px w-7 shrink-0 bg-[#555]" />
        <Icon size={25} color={DARK} className="mt-[7px]"><path d="M11 23H1V1h22v11M5 7h3M11 7h8M5 12h3M11 12h4M5 17h3" /><path d="M13 19q5-6 10 0-5 6-10 0z" stroke={BLUE} /><circle cx="18" cy="19" r="1" stroke={BLUE} /></Icon>
      </div>
      <button aria-label="收起工具栏" className="absolute top-[149px] right-0 grid h-[77px] w-5 place-items-center rounded-l-[4px] bg-[#484848] text-[#bbb]">
        <ChevronRight size={15} />
      </button>
    </section>
  );
}

/* ---------- rebar editor ---------- */

function BarButton({ icon, label }) {
  return (
    <button className="flex items-center gap-[7px]">
      {icon}
      {label}
    </button>
  );
}

function FormulaEditor() {
  const ref = useRef(null);
  useEffect(() => {
    ref.current.focus({ preventScroll: true });
    ref.current.select();
  }, []);
  return (
    <div className="flex h-[58px] border-2 border-[#6fa3dc] bg-[#c9dff0]">
      <textarea
        ref={ref}
        aria-label="根数"
        readOnly
        defaultValue={"Ceil(600/100)+1+Ceil\n(550/100)+1+Ceil(2.3\n*46*14/"}
        className="ml-0.5 h-full w-[161px] resize-none overflow-hidden bg-white pl-1 font-['Noto_Sans'] text-base leading-[22px] whitespace-pre text-[#55657e] outline-none selection:bg-[#a5c1e9] selection:text-[#55657e]"
      />
      <button aria-label="编辑公式" className="m-[3px] grid flex-1 place-items-center rounded-[3px] border border-[#7db3d6] bg-[#e6f1f9] text-[#4a6fb5]">
        <svg width="13" height="3" fill="currentColor"><path d="M0 0h3v3H0zM5 0h3v3H5zM10 0h3v3h-3z" /></svg>
      </button>
    </div>
  );
}

function Stirrup({ side }) {
  return (
    <svg width="268" height="54" viewBox="0 0 268 54" fontFamily="'Liberation Serif', serif" fontSize="24" className="block">
      <text x="69" y="35" fill="#3e5556">{side}</text>
      <rect x="131" y="3" width="77" height="48" rx="1" fill="none" stroke="#000" strokeWidth="2" />
      <text x="134" y="43" fill="#c93d47">550</text>
      <path d="M178 17l21-14M192 29l14-18" stroke="#000" strokeWidth="2" />
    </svg>
  );
}

const rebarRows = [
  { no: 3, name: "H边纵筋.1", shape: "1", formula: "3000-20", desc: "层高-保护层", len: 2980, count: "6" },
  { no: 4, name: "箍筋.1", shape: "195", side: 550, formula: "2*(560+560)-4*d\n+2*(12.89*d)", len: 2458, active: true },
  { no: 5, name: "箍筋.2", shape: "195", side: 287, formula: "2*(560+297)-4*d\n+2*(12.89*d)", len: 1932, count: "80" }
];

function RebarTable() {
  return (
    <table className="w-[1025px] table-fixed border-collapse">
      <colgroup>
        <col className="w-[9px]" />
        <col className="w-[91px]" />
        <col className="w-[45px]" />
        <col className="w-[41px]" />
        <col className="w-[270px]" />
        <col className="w-[208px]" />
        <col className="w-[76px]" />
        <col className="w-[47px]" />
        <col className="w-[191px]" />
        <col className="w-[47px]" />
      </colgroup>
      <thead>
        <tr className="h-[26px] text-[15px]">
          {["", "筋号", "级别", "图号", "图形", "计算公式", "公式描述", "长度", "根数", "搭接"].map((t) => (
            <th key={t} className={t === "根数" ? "bg-[#7fb5ee] p-0 font-medium text-white" : "overflow-hidden border-r border-[#e2e2e2] p-0 font-normal whitespace-nowrap"}>{t}</th>
          ))}
        </tr>
      </thead>
      <tbody className="font-['Liberation_Mono','Noto_Sans_CJK_SC',monospace] text-[13px] leading-[17px] text-black">
        {rebarRows.map((r) => (
          <tr key={r.no} className="h-[58px] bg-[#c0e0dc]">
            <td className={r.active ? "bg-[#7fb2ea] p-0 text-sm text-white" : "bg-[#ededed] p-0 text-sm text-[#555]"}>{r.no}</td>
            <td className="p-0 pl-1 text-[15px] whitespace-nowrap">{r.name}</td>
            <td className="p-0 pl-1.5"><RebarMark /></td>
            <td className="p-0 pl-1">{r.shape}</td>
            <td className="p-0">
              {r.side ? (
                <Stirrup side={r.side} />
              ) : (
                <div className="mr-1.5 ml-[23px] border-b-2 border-black pb-1 pl-2 text-center text-[15px] text-[#cf2733]">2980</div>
              )}
            </td>
            <td className="p-0 pl-1 whitespace-pre">{r.formula}</td>
            <td className="p-0 pl-1 text-[15px]">{r.desc}</td>
            <td className="p-0 pl-1">{r.len}</td>
            <td className="p-0">
              {r.active ? (
                <FormulaEditor />
              ) : (
                <div className="relative pl-1">
                  {r.count}
                  {r.no === 3 && (
                    <svg width="8" height="15" viewBox="0 0 8 15" className="absolute top-[22px] left-1" fill="none" stroke="#222"><path d="M0 .5h3l1 1 1-1h3M4 1v13M0 14.500h3l1-1 1 1h3" /></svg>
                  )}
                </div>
              )}
            </td>
            <td className="p-0 pl-1">0</td>
          </tr>
        ))}
        <tr className="h-[26px] border-b border-[#e2e2e2]">
          <td className="bg-[#ededed] p-0 text-sm text-[#555]">6</td>
          {[1, 2, 3, 4, 5, 6, 7, 8].map((i) => <td key={i} className="border-r border-[#e2e2e2] p-0" />)}
          <td />
        </tr>
      </tbody>
    </table>
  );
}

function RebarEditor() {
  return (
    <section className="mt-1.5 flex min-h-0 flex-1 flex-col overflow-hidden border border-[#d9dbdb] bg-white">
      <div className="flex h-[34px] shrink-0 items-center bg-[#eeefef] pr-2.5 pl-3">
        <Grip />
        <span className="ml-3">编辑钢筋</span>
        <CloseButton />
      </div>
      <div className="flex h-[35px] shrink-0 items-center gap-[15px] border-b border-[#e6e6e6] pl-2 whitespace-nowrap">
        <div className="flex gap-[21px]">
          <button aria-label="首个"><Icon size={18}><path d="M3 2v20M20 3v18L8 12z" /></Icon></button>
          <button aria-label="上一个"><Icon size={18}><path d="M18 3v18L7 12z" /></Icon></button>
          <button aria-label="下一个"><Icon size={18}><path d="M6 3v18l11-9z" /></Icon></button>
          <button aria-label="末个"><Icon size={18}><path d="M21 2v20M4 3v18l12-9z" /></Icon></button>
          <button aria-label="上移"><Icon size={18} color={DARK}><rect x="1" y="1" width="22" height="22" rx="1" /><path d="M12 18V6M8 10l4-4 4 4" stroke={BLUE} /></Icon></button>
          <button aria-label="下移"><Icon size={18} color={DARK}><rect x="1" y="1" width="22" height="22" rx="1" /><path d="M12 6v12M8 14l4 4 4-4" stroke={BLUE} /></Icon></button>
        </div>
        <BarButton label="插入" icon={<Icon size={18} color={DARK}><path d="M1 3h13M1 20h13M1 7h11v8H1z" /><path d="M14 11h9M19 7l4 4-4 4" stroke={BLUE} /></Icon>} />
        <BarButton label="删除" icon={<Icon size={18} color={DARK}><path d="M1 6h22M3 6v16h18V6M7 6V2h10v4" /><path d="M9 11v7M15 11v7" stroke="#c43150" /></Icon>} />
        <BarButton label="缩尺配筋" icon={<Icon size={18} color={DARK}><path d="M2 2v14M7 5v11M12 8v8M17 10v6M22 13v3" /><path d="M2 21h20M4 19l-3 2 3 2M20 19l3 2-3 2" stroke={BLUE} /></Icon>} />
        <BarButton label="钢筋信息" icon={<Icon size={18} color={DARK}><path d="M12 23H1V1h22v11M5 7h2M10 7h9M5 12h2M10 12h6M5 17h2" /><path d="M22 18h-9M16 14l-4 4 4 4M20 15v6" stroke={BLUE} /></Icon>} />
        <BarButton label="钢筋图库" icon={<Icon size={18} color={DARK}><rect x="1" y="1" width="22" height="22" rx="1" /><path d="M6 6h5v8H6v-4h5M14 14V8h4v6" /><path d="M5 19h6M14 19h5" stroke={BLUE} /></Icon>} />
        <button className="flex items-center gap-2">其他<Caret /></button>
        <span>单构件钢筋总重(kg)：202.216</span>
      </div>
      <div className="flex min-h-0 flex-1 flex-col">
        <div className="flex min-h-0 flex-1 items-start">
          <RebarTable />
          <div className="mt-[100px] ml-1 h-[166px] w-1 rounded-full bg-[#e6e6e6]" />
        </div>
        <div className="mb-1.5 ml-[83px] h-1 w-[593px] rounded-full bg-[#e6e8e8]" />
      </div>
    </section>
  );
}

/* ---------- display settings ---------- */

// [level, name, shown state, name checkbox disabled]
const layers = [
  [0, "所有构件", "partial"],
  [1, "轴线", "on", true],
  [2, "轴网", "on", true],
  [2, "辅助轴线", "on", true],
  [1, "柱", "on"],
  [2, "柱", "on"],
  [2, "构造柱", "on"],
  [2, "砌体柱", "on"],
  [2, "约束边缘非阴...", "on"],
  [1, "墙", "partial"],
  [2, "剪力墙", "on"],
  [2, "人防门框墙", "on"],
  [2, "砌体墙", "on"],
  [2, "砌体加筋", "off"],
  [2, "保温墙", "on"],
  [2, "暗梁", "off"],
  [2, "墙垛", "off"],
  [2, "幕墙", "on"],
  [1, "门窗洞", "off"],
  [2, "门", "off"],
  [2, "窗", "off"],
  [2, "门联窗", "off"],
  [2, "墙洞", "off"]
];

function TreeToggle() {
  return (
    <button aria-label="折叠" className="grid h-4 w-4 shrink-0 place-items-center rounded-[2px] border border-[#888] bg-white">
      <span className="h-px w-1.5 bg-[#444]" />
    </button>
  );
}

function DisplaySettings() {
  return (
    <aside className="flex w-[350px] shrink-0 flex-col overflow-hidden border border-[#c9cccc] bg-white">
      <div className="flex h-[35px] shrink-0 items-center bg-[#edeeef] pr-2.5 pl-[11px]">
        <Grip />
        <span className="ml-3">显示设置</span>
        <CloseButton />
      </div>
      <div className="flex h-[34px] shrink-0 items-end gap-1 border-b border-[#ccc] pl-[3px]">
        <button className="-mb-px h-[29px] w-[77px] rounded-t-[4px] border border-b-0 border-[#ccc] bg-white text-[#2f74d0]">图元显示</button>
        <button className="h-[26px] w-[75px] rounded-t-[4px] bg-[#dbdbdb] text-[#555]">楼层显示</button>
      </div>
      <div className="mt-[3px] mr-1 ml-[3px] flex h-[625px] shrink-0 items-start overflow-hidden border border-[#d5d8d8]">
        <table className="h-[630px] w-[324px] shrink-0 table-fixed border-separate border-spacing-0">
          <colgroup>
            <col className="w-[167px]" />
            <col className="w-[78px]" />
            <col className="w-[79px]" />
          </colgroup>
          <thead>
            <tr>
              {["图层构件", "显示图元", "显示名称"].map((t) => (
                <th key={t} className="border-r border-b border-[#d9dcdc] p-0 leading-[25px] font-normal">{t}</th>
              ))}
            </tr>
          </thead>
          <tbody>
            {layers.map(([level, name, state, off], i) => {
              const last = level === 2 && (layers[i + 1]?.[0] ?? 2) !== 2;
              return (
                <tr key={i}>
                  <td className="border-r border-b border-[#d9dcdc] p-0">
                    <div className="flex h-[25px] items-center whitespace-nowrap">
                      {level === 0 && <span className="mr-2 ml-0.5 flex"><TreeToggle /></span>}
                      {level === 1 && <span className="mr-2 ml-[9px] flex h-full items-center border-l border-[#e2e2e2] pl-[5px]"><TreeToggle /></span>}
                      {level === 2 && (
                        <span className="ml-[9px] flex h-full border-l border-[#e2e2e2] pl-3">
                          <svg width="28" height="25" stroke="#dcdcdc" fill="none"><path d={last ? "M.5 0v12.500h20" : "M.5 0v25M.5 12.500h20"} /></svg>
                        </span>
                      )}
                      {name}
                    </div>
                  </td>
                  <td className="border-r border-b border-[#d9dcdc] p-0 text-center leading-none">
                    <Check label={`${name} 显示图元`} checked={state === "on"} partial={state === "partial"} />
                  </td>
                  <td className="border-r border-b border-[#d9dcdc] p-0 text-center leading-none">
                    <Check label={`${name} 显示名称`} disabled={off} />
                  </td>
                </tr>
              );
            })}
          </tbody>
        </table>
        <div className="mt-4 ml-[5px] h-[113px] w-1 rounded-full bg-[#e4e6e6]" />
      </div>
      <div className="flex justify-end pt-[7px] pr-2.5">
        <button className="h-8 w-28 rounded-[4px] border border-[#cfd2d2] bg-white">恢复默认设置</button>
      </div>
    </aside>
  );
}

/* ---------- status bar ---------- */

function StatusBar() {
  const box = "flex h-[31px] items-center justify-center rounded-[3px] border border-[#9b9ea1]";
  return (
    <div className="flex h-[39px] shrink-0 items-center bg-[#fdfdfd] whitespace-nowrap">
      <span className="w-[113px] pl-0.5">层高：&nbsp;&nbsp;3</span>
      <span className="w-[176px]">标高：&nbsp;&nbsp;-0.05~2.95</span>
      <span className="w-[138px]">选中图元：1(1)</span>
      <span className="w-[137px]">隐藏图元：0</span>
      <div className="flex items-center gap-[5px]">
        <button aria-label="正交" className={`${box} w-8`}><Icon size={20} color={DARK}><path d="M4 3v18h18M4 14h6v7" /></Icon></button>
        <button aria-label="点选" className="flex h-[31px] w-[45px] items-center justify-center gap-2 rounded-[3px] border border-[#5d8fd0] bg-[#cfe1f6]"><Icon size={21} color={DARK}><rect x="4" y="3" width="18" height="19" rx="2" /><circle cx="4" cy="4" r="2.500" stroke={BLUE} fill="#cfe1f6" /></Icon><Caret /></button>
        <button aria-label="交点" className={`${box} w-8`}><Icon size={22} color="#777"><path d="M3 2l18 20M21 2L3 22M9 12l3-3 3 3-3 3z" /></Icon></button>
        <button aria-label="角度" className={`${box} ml-0.5 w-[45px] gap-2`}><Icon size={21} color="#777"><path d="M22 21H2L20 3M9 13q5 2 4 8" /></Icon><Caret /></button>
        <button aria-label="偏移" className={`${box} w-[45px] gap-2`}><Icon size={21} color={DARK}><path d="M1 7h9M5.500 2.500v9" /><path d="M10 15h13v6H10z" fill={DARK} /></Icon><Caret /></button>
        <button aria-label="图层" className={`${box} w-[31px]`}><Icon size={20} color={DARK}><path d="M5 4h13v13H5z" fill={DARK} /><path d="M2 2h19v14M2 2v18h12M17 15l5 4-5 3z" /></Icon></button>
        <button aria-label="折线" className={`${box} w-[31px]`}><Icon size={22} color="#777"><path d="M2 21q3-10 4-14l16-4" /><path d="M14 12l7 6-7 3z" fill={DARK} /></Icon></button>
        <button aria-label="全屏" className="ml-3"><Icon size={22} color={DARK}><path d="M14 10l8-8M16 2h6v6M10 14l-8 8M2 16v6h6" /></Icon></button>
      </div>
      <div className="ml-auto flex items-center gap-[7px] pr-3.5">
        <svg width="18" height="18" viewBox="0 0 18 18"><circle cx="9" cy="9" r="9" fill="#6fb72c" /><path d="M5 9l3 3 5-6" fill="none" stroke="#fff" strokeWidth="1.500" /></svg>
        实时计算已完成
      </div>
    </div>
  );
}

/* ---------- windows taskbar ---------- */

function Penguin({ size = 30 }) {
  return (
    <svg width={size} height={size} viewBox="0 0 30 30">
      <path d="M7 14C5-3 25-3 23 14c6 8 3 10 1 7-1 9-17 9-18 0-2 3-5 1 1-7z" fill="#111" />
      <ellipse cx="15" cy="21" rx="7" ry="7" fill="#fff" />
      <ellipse cx="12" cy="7" rx="2" ry="3" fill="#fff" />
      <ellipse cx="18" cy="7" rx="2" ry="3" fill="#fff" />
      <path d="M9 11q6 5 12 0-6-3-12 0zM7 28q3-3 7 0zM16 28q4-3 7 0z" fill="#f5a623" />
      <path d="M6 14q9 6 18 0v4q-7 3-12 2v5H9v-6l-3-2z" fill="#d9202a" />
    </svg>
  );
}

const apps = [
  ["任务视图", <svg key="1" width="30" height="30"><path d="M0 7h22v22H0z" fill="#25292c" /><path d="M8 1h21v20H8z" fill="#fff" opacity=".75" /></svg>],
  ["资源管理器", <svg key="2" width="30" height="30"><path d="M0 2h11l3 4h16v22H0z" fill="#e0a526" /><path d="M0 8h30v20H0z" fill="#fccb45" /><path d="M6 21h18v7H6z" fill="#1671c4" /></svg>, "run"],
  ["QQ", <Penguin key="3" />],
  ["Edge", <svg key="4" width="30" height="30"><circle cx="15" cy="15" r="14.500" fill="#1b78cc" /><path d="M1 13C4-3 28-3 29.500 13c0 7-10 8-10 4 3-5-2-8-7-8-6 0-9 4-11.500 4z" fill="#3fc79a" /><path d="M10 14c-3 8 4 15 14 12-5 5-22 4-20-7 1-4 4-5 6-5z" fill="#124f95" /><path d="M12 16c0-6 9-6 8 0-1 4 4 5 8 3-2 5-16 8-16-3z" fill="#d6f0f5" /></svg>],
  ["应用商店", <svg key="5" width="30" height="30"><path d="M8 7V2h14v5" fill="none" stroke="#41a5e8" strokeWidth="2" /><rect x="1" y="6" width="28" height="23" rx="3" fill="#1b3f69" /><path d="M9 11h5v5H9z" fill="#f25022" /><path d="M16 11h5v5h-5z" fill="#7fba00" /><path d="M9 18h5v5H9z" fill="#00a4ef" /><path d="M16 18h5v5h-5z" fill="#ffb900" /></svg>],
  ["浏览器", <svg key="6" width="30" height="30" fill="none" stroke="#1e90e0" strokeWidth="5"><path d="M4 11C8 1 22 1 25 9c1 4-12 4-19 12" /><path d="M26 18c-3 11-16 11-19 5-2-5 10-5 20-13" stroke="#1a84d8" /></svg>],
  ["模型", <svg key="7" width="30" height="30"><rect width="30" height="30" rx="4" fill="#1c2126" /><path d="M7 6l8 8 8-8M6 9v11l7 5V15zM24 9v11l-7 5V15z" fill="none" stroke="#aab" strokeWidth="1.500" /></svg>],
  ["商城", <svg key="8" width="30" height="30"><path d="M3 2h24l2 26H1z" fill="#1fc568" /><path d="M9 11q6 8 12 0" fill="none" stroke="#fff" strokeWidth="2.500" /></svg>],
  ["飞鸟", <svg key="9" width="30" height="30"><rect width="30" height="30" rx="5" fill="#3c82e8" /><path d="M4 6l12 6 2-8 4 8 5 1-4 3c0 6-5 8-9 9l-5 2 3-7c-4-2-6-4-5-6l3 1z" fill="#fff" /></svg>],
  ["WPS", <svg key="10" width="30" height="30" fill="none" stroke="#d8302a" strokeWidth="4"><path d="M1 7h5l5 16 7-14M12 7h4l4 16 7-16h-8" /></svg>, "run"],
  ["安全", <svg key="11" width="30" height="30"><path d="M4 4l11-2 11 2v10l-11 15L4 14z" fill="#b7c9d2" /><path d="M6 6q9-4 18-1-10 1-9 5 9 2 8 7-2 5-8 9 4-7-1-9-9-2-8-11z" fill="#176c98" /></svg>, "run"],
  ["广联达", <svg key="12" width="30" height="30"><rect width="30" height="30" rx="5" fill="#2b67ef" /><path d="M5 11l14-6 6 3-6 4v12l-5-2V12l-5 1z" fill="#fff" /></svg>, "active"],
  ["录屏", <svg key="13" width="30" height="30"><rect width="30" height="30" rx="5" fill="#16181d" /><rect x="5" y="8" width="14" height="14" rx="3" fill="none" stroke="#fff" strokeWidth="1.500" /><path d="M20 14l5-5v12l-5-5z" fill="none" stroke="#fff" strokeWidth="1.500" /><circle cx="14" cy="12" r="1" fill="#e7d33a" /></svg>, "run"]
];

function Taskbar() {
  return (
    <footer className="flex h-[60px] shrink-0 items-center border-t-2 border-[#a3aeb3] bg-linear-to-r from-[#d5e3ef] via-[#cbe9ef] to-[#cceeee] pb-1">
      <div className="flex w-[301px] items-center gap-2 pl-6">
        <svg width="32" height="28" viewBox="0 0 32 28"><circle cx="22" cy="9" r="8" fill="#f59a22" /><path d="M7 27c-9 0-9-10-1-11C8 5 22 6 23 15c9 0 9 12 1 12z" fill="#b7cdee" /></svg>
        <div className="text-[15px] leading-5">
          <div>29°C</div>
          <div className="text-[#444]">多云</div>
        </div>
      </div>
      <button aria-label="开始菜单" className="mr-[18px] ml-6">
        <svg width="29" height="29"><path d="M0 0h14v14H0z" fill="#3ab4ee" /><path d="M15 0h14v14H15z" fill="#1c96dc" /><path d="M0 15h14v14H0z" fill="#1689d6" /><path d="M15 15h14v14H15z" fill="#0a70c0" /></svg>
      </button>
      <div className="flex h-[38px] w-[273px] items-center rounded-full bg-[#eef6fa] pl-3.5">
        <Search size={20} strokeWidth={2.5} />
        <input aria-label="搜索" placeholder="搜索" className="ml-2.5 w-20 flex-1 bg-transparent text-lg outline-none placeholder:text-[#444]" />
        <svg width="62" height="36" viewBox="0 0 62 36">
          <path d="M3 33q8-8 14-4l3-18 4-3 3 6 3-12 5-1 2 11 4-7 5 1 2 17 4 9 8-14v10q-5 8-14 6z" fill="#7c7660" />
          <path d="M19 33V12M26 33V15M33 33V6M40 33V14M46 33V10" stroke="#3e3c34" strokeWidth="2" />
          <path d="M22 33V10M36 33V9M43 33V10" stroke="#b9ad86" strokeWidth="2" />
          <path d="M2 8q8-6 14 0zM38 27q8-7 14 0 8-3 9 4-10 4-23-4zM2 31q7-5 14 0z" fill="#cfcdd2" />
        </svg>
      </div>
      <div className="flex items-center gap-[7px] pl-[7px]">
        {apps.map(([name, logo, state]) => (
          <button key={name} aria-label={name} className={`relative grid h-12 w-12 place-items-center rounded-[4px] ${state === "active" ? "bg-[#e6f7fa]" : ""}`}>
            {logo}
            {state === "run" && <span className="absolute -bottom-px h-1 w-2 rounded-full bg-[#7d8b92]" />}
            {state === "active" && <span className="absolute -bottom-px h-1 w-5 rounded-full bg-[#1b6fb5]" />}
          </button>
        ))}
      </div>
      <div className="ml-auto flex items-center pr-[25px] text-[#1b1b1b]">
        <ChevronUp size={20} className="mr-5" />
        <svg width="20" height="20" className="mr-5"><rect y="1" width="19" height="19" rx="4" fill="#37a0ea" /><path d="M6 12q4 5 8 0M7 8v1M13 8v1" stroke="#fff" strokeWidth="1.500" fill="none" /><circle cx="17" cy="3" r="3" fill="#e2574c" /></svg>
        <CloudOff size={20} strokeWidth={1.5} className="mr-5" />
        <span className="mr-5"><Penguin size={20} /></span>
        <Mic size={20} strokeWidth={1.5} className="mr-[22px] text-[#1d4e80]" />
        <span className="mr-[29px] w-5 text-[17px] text-[#555]">中</span>
        <svg width="20" height="20" viewBox="0 0 40 40" className="mr-[25px]"><path d="M1 7l32-6 6 30L8 39z" fill="#e05a2c" /><path d="M29 11C20 7 10 10 11 15s17 3 18 9-12 8-18 4" fill="none" stroke="#fff" strokeWidth="5" /></svg>
        <Wifi size={20} className="mr-2.5" />
        <Volume2 size={20} strokeWidth={1.5} className="mr-2.5" />
        <svg width="20" height="18" className="mr-[22px]"><rect x="1" y="5" width="16" height="11" rx="2" fill="none" stroke="#111" strokeWidth="1.500" /><path d="M3 7h12v7H3zM18 9h2v4h-2z" fill="#111" /><path d="M5 0L1 7h3l-1 5 5-7H5z" fill="#111" stroke="#cceeee" /></svg>
        <div className="text-right text-[15px] leading-5">
          <div>9:22</div>
          <div>2023-08-19</div>
        </div>
        <span className="ml-3.5 grid h-5 w-5 place-items-center rounded-full bg-[#0b6fc0] text-xs text-white">1</span>
      </div>
    </footer>
  );
}

export default function App() {
  return (
    <div className="relative flex h-screen flex-col overflow-hidden bg-[#f8f9f9] font-['Noto_Sans','Noto_Sans_CJK_SC',sans-serif] text-[15px] leading-[22px] text-[#333]">
      <TitleBar />
      <MenuRow />
      <Ribbon />
      <FloorSelectors />
      <main className="flex min-h-0 flex-1 gap-[5px]">
        <NavPanel />
        <div className="flex w-[350px] shrink-0 flex-col">
          <ComponentPanel />
          <div className="h-[5px] shrink-0" />
          <PropertyPanel />
          <div className="flex h-[37px] shrink-0 items-center pl-[7px]">
            <button className="h-[30px] w-[101px] rounded-[4px] border border-[#cfd2d2] bg-white">截面编辑</button>
          </div>
        </div>
        <div className="flex min-w-0 flex-1 flex-col">
          <View3D />
          <RebarEditor />
        </div>
        <DisplaySettings />
      </main>
      <StatusBar />
      <Taskbar />
      <button aria-label="加密锁" className="absolute top-[711px] right-[7px] grid h-[50px] w-[50px] place-items-center rounded-full border-4 border-[#cdd3f0] bg-[#dce6f8]">
        <svg width="18" height="30" viewBox="0 0 18 30"><path d="M3 1h12v7H3z" fill="#bbb" /><path d="M6 3h2v2H6zM10 3h2v2h-2z" fill="#555" /><path d="M0 8h18v12q0 9-9 9t-9-9z" fill="#4c74ea" /></svg>
      </button>
    </div>
  );
}
